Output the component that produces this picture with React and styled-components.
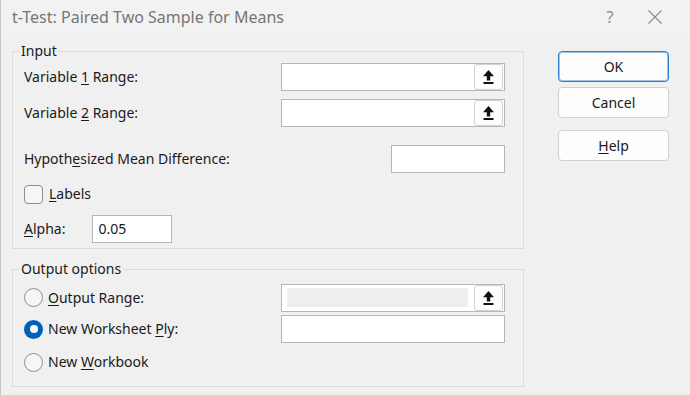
import React from 'react'
import styled, { createGlobalStyle } from 'styled-components'

const GlobalStyle = createGlobalStyle`
    html, body {
        margin: 0;
        padding: 0;
        background: #f0f0f0;
    }
    * {
        box-sizing: border-box;
    }
`;

const Window = styled.div`
    width: 690px;
    height: 395px;
    background: #f0f0f0;
    border-left: 1px solid #c9c9c9;
    font-family: "Noto Sans", "Open Sans", sans-serif;
    font-size: 14px;
    color: #1a1a1a;
    overflow: hidden;
`;

const TitleBar = styled.div`
    height: 34px;
    display: flex;
    align-items: center;
    padding-left: 11px;
    background: #f2f2f2;
`;

const Title = styled.div`
    flex: 1;
    font-size: 16px;
    color: #767676;
`;

const TitleIcon = styled.div`
    width: ${p => p.$w}px;
    display: flex;
    justify-content: center;
    align-items: center;
    color: #8c8c8c;
    font-size: 16px;
`;

const Body = styled.div`
    display: flex;
    padding: 7px 0 0 11px;
`;

const LeftCol = styled.div`
    width: 512px;
    display: flex;
    flex-direction: column;
    gap: 10px;
`;

const Group = styled.fieldset`
    margin: 0;
    padding: 0;
    min-width: 0;
    height: ${p => p.$h}px;
    border: 1px solid #dcdcdc;
`;

const Legend = styled.legend`
    margin-left: 6px;
    padding: 0 2px;
    line-height: 20px;
    font-size: 14px;
    color: #1a1a1a;
`;

const GroupInner = styled.div`
    padding: 0 18px 0 11px;
`;

const Row = styled.div`
    display: flex;
    align-items: center;
    justify-content: ${p => p.$start ? 'flex-start' : 'space-between'};
    height: ${p => p.$h || 28}px;
    margin-top: ${p => p.$mt || 0}px;
`;

const Label = styled.span`
    line-height: 20px;
    white-space: nowrap;
    u {
        text-underline-offset: 2px;
    }
`;

const Field = styled.div`
    display: flex;
    align-items: center;
    justify-content: flex-end;
    width: ${p => p.$w}px;
    height: ${p => p.$h || 28}px;
    border: 1px solid #b6b6b6;
    background: #fff;
    padding: 0 1px 0 ${p => p.$pl || 5}px;
    margin-left: ${p => p.$ml || 0}px;
    line-height: 20px;
    color: #1a1a1a;
`;

const FieldText = styled.span`
    flex: 1;
`;

const Disabled = styled.div`
    flex: 1;
    height: 19px;
    margin-right: 6px;
    background: #eeeeee;
`;

const RefButton = styled.div`
    width: 29px;
    height: 26px;
    border: 1px solid #d2d2d2;
    border-radius: 3px;
    background: #fdfdfd;
    display: flex;
    align-items: center;
    justify-content: center;
`;

const Check = styled.span`
    width: 19px;
    height: 19px;
    border: 1px solid #8d8d8d;
    border-radius: 4px;
    background: #f6f6f6;
    margin-right: 6px;
`;

const Radio = styled.span`
    width: 19px;
    height: 19px;
    border-radius: 50%;
    border: ${p => p.$on ? 'none' : '1px solid #8d8d8d'};
    background: ${p => p.$on ? '#0061b9' : '#f6f6f6'};
    margin-right: 5px;
    display: flex;
    align-items: center;
    justify-content: center;
    &::after {
        content: '';
        display: ${p => p.$on ? 'block' : 'none'};
        width: 8px;
        height: 8px;
        border-radius: 50%;
        background: #fff;
    }
`;

const Choice = styled.div`
    display: flex;
    align-items: center;
`;

const RightCol = styled.div`
    display: flex;
    flex-direction: column;
    padding-top: 10px;
    margin-left: 34px;
`;

const Button = styled.div`
    width: 111px;
    height: 31px;
    margin-top: ${p => p.$mt || 0}px;
    border-radius: 4px;
    background: #fdfdfd;
    border: 1px solid ${p => p.$primary ? '#2f7fd0' : '#d0d0d0'};
    box-shadow: ${p => p.$primary ? 'inset 0 0 0 1px rgba(47,127,208,0.45)' : 'none'};
    display: flex;
    align-items: center;
    justify-content: center;
    font-size: 14px;
    color: #1a1a1a;
    u {
        text-underline-offset: 2px;
    }
`;

const UpArrow = () => (
    <svg width="13" height="16" viewBox="0 0 13 16">
        <path d="M6.5 1 L12 7.2 L8.2 7.2 L8.2 11.4 L4.8 11.4 L4.8 7.2 L1 7.2 Z" fill="#111" />
        <rect x="1.5" y="13" width="10" height="2" fill="#111" />
    </svg>
);

const CloseIcon = () => (
    <svg width="16" height="16" viewBox="0 0 16 16">
        <path d="M1.5 1.5 L14.5 14.5 M14.5 1.5 L1.5 14.5" stroke="#8c8c8c" strokeWidth="1.1" />
    </svg>
);

const RangeField = ({ disabled }) => (
    <Field $w={224}>
        {disabled ? <Disabled /> : <FieldText />}
        <RefButton><UpArrow /></RefButton>
    </Field>
);

const App = () => {
    return (
        <Window>
            <GlobalStyle />
            <TitleBar>
                <Title>t-Test: Paired Two Sample for Means</Title>
                <TitleIcon $w={20}>?</TitleIcon>
                <TitleIcon $w={70}><CloseIcon /></TitleIcon>
            </TitleBar>
            <Body>
                <LeftCol>
                    <Group $h={208}>
                        <Legend>Input</Legend>
                        <GroupInner>
                            <Row $mt={2}>
                                <Label>Variable <u>1</u> Range:</Label>
                                <RangeField />
                            </Row>
                            <Row $mt={8}>
                                <Label>Variable <u>2</u> Range:</Label>
                                <RangeField />
                            </Row>
                            <Row $mt={18}>
                                <Label>Hypoth<u>e</u>sized Mean Difference:</Label>
                                <Field $w={114} />
                            </Row>
                            <Row $start $mt={10} $h={22}>
                                <Choice>
                                    <Check />
                                    <Label><u>L</u>abels</Label>
                                </Choice>
                            </Row>
                            <Row $start $mt={10}>
                                <Label><u>A</u>lpha:</Label>
                                <Field $w={80} $ml={27}><FieldText>0.05</FieldText></Field>
                            </Row>
                        </GroupInner>
                    </Group>
                    <Group $h={128}>
                        <Legend>Output options</Legend>
                        <GroupInner>
                            <Row $mt={4} $h={29}>
                                <Choice>
                                    <Radio />
                                    <Label><u>O</u>utput Range:</Label>
                                </Choice>
                                <RangeField disabled />
                            </Row>
                            <Row $mt={3}>
                                <Choice>
                                    <Radio $on />
                                    <Label>New Worksheet <u>P</u>ly:</Label>
                                </Choice>
                                <Field $w={224} />
                            </Row>
                            <Row $start $mt={5}>
                                <Choice>
                                    <Radio />
                                    <Label>New <u>W</u>orkbook</Label>
                                </Choice>
                            </Row>
                        </GroupInner>
                    </Group>
                </LeftCol>
                <RightCol>
                    <Button $primary>OK</Button>
                    <Button $mt={5}>Cancel</Button>
                    <Button $mt={12}><span><u>H</u>elp</span></Button>
                </RightCol>
            </Body>
        </Window>
    )
}

export default App
